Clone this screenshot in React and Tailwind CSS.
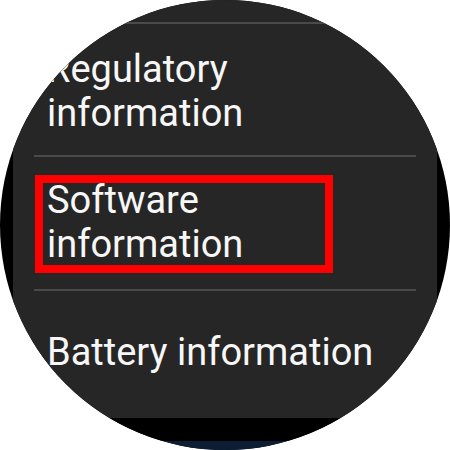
export default function App() {
  const font = { fontFamily: 'Roboto, "Noto Sans", sans-serif' };
  return (
    <div className="w-[450px] h-[450px] bg-white relative">
      <div className="w-[450px] h-[450px] rounded-full overflow-hidden bg-black flex flex-col">
        <div
          className="mx-[13px] h-[418px] shrink-0 bg-[#262626] flex flex-col text-[#f7f7f7] text-[38px] leading-[44px]"
          style={font}
        >
          <div className="h-[22px] shrink-0" />
          <div className="mx-[21px] h-[2px] bg-[#4a4a4a] shrink-0" />
          <div className="mt-[23px] pl-[34px]">
            <div>Regulatory</div>
            <div>information</div>
          </div>
          <div className="mt-[20px] mx-[21px] h-[2px] bg-[#4a4a4a] shrink-0" />
          <div className="mt-[21px] pl-[34px]">
            <div>Software</div>
            <div>information</div>
          </div>
          <div className="mt-[23px] mx-[21px] h-[2px] bg-[#4a4a4a] shrink-0" />
          <div className="mt-[39px] pl-[34px] whitespace-nowrap">Battery information</div>
        </div>
        <div className="h-[23px] shrink-0 bg-black" />
        <div className="flex-1 bg-[#0d1d33]" />
      </div>
      <div className="absolute left-[35px] top-[175px] w-[298px] h-[98px] border-[8px] border-[#ff0000]" />
    </div>
  );
}
